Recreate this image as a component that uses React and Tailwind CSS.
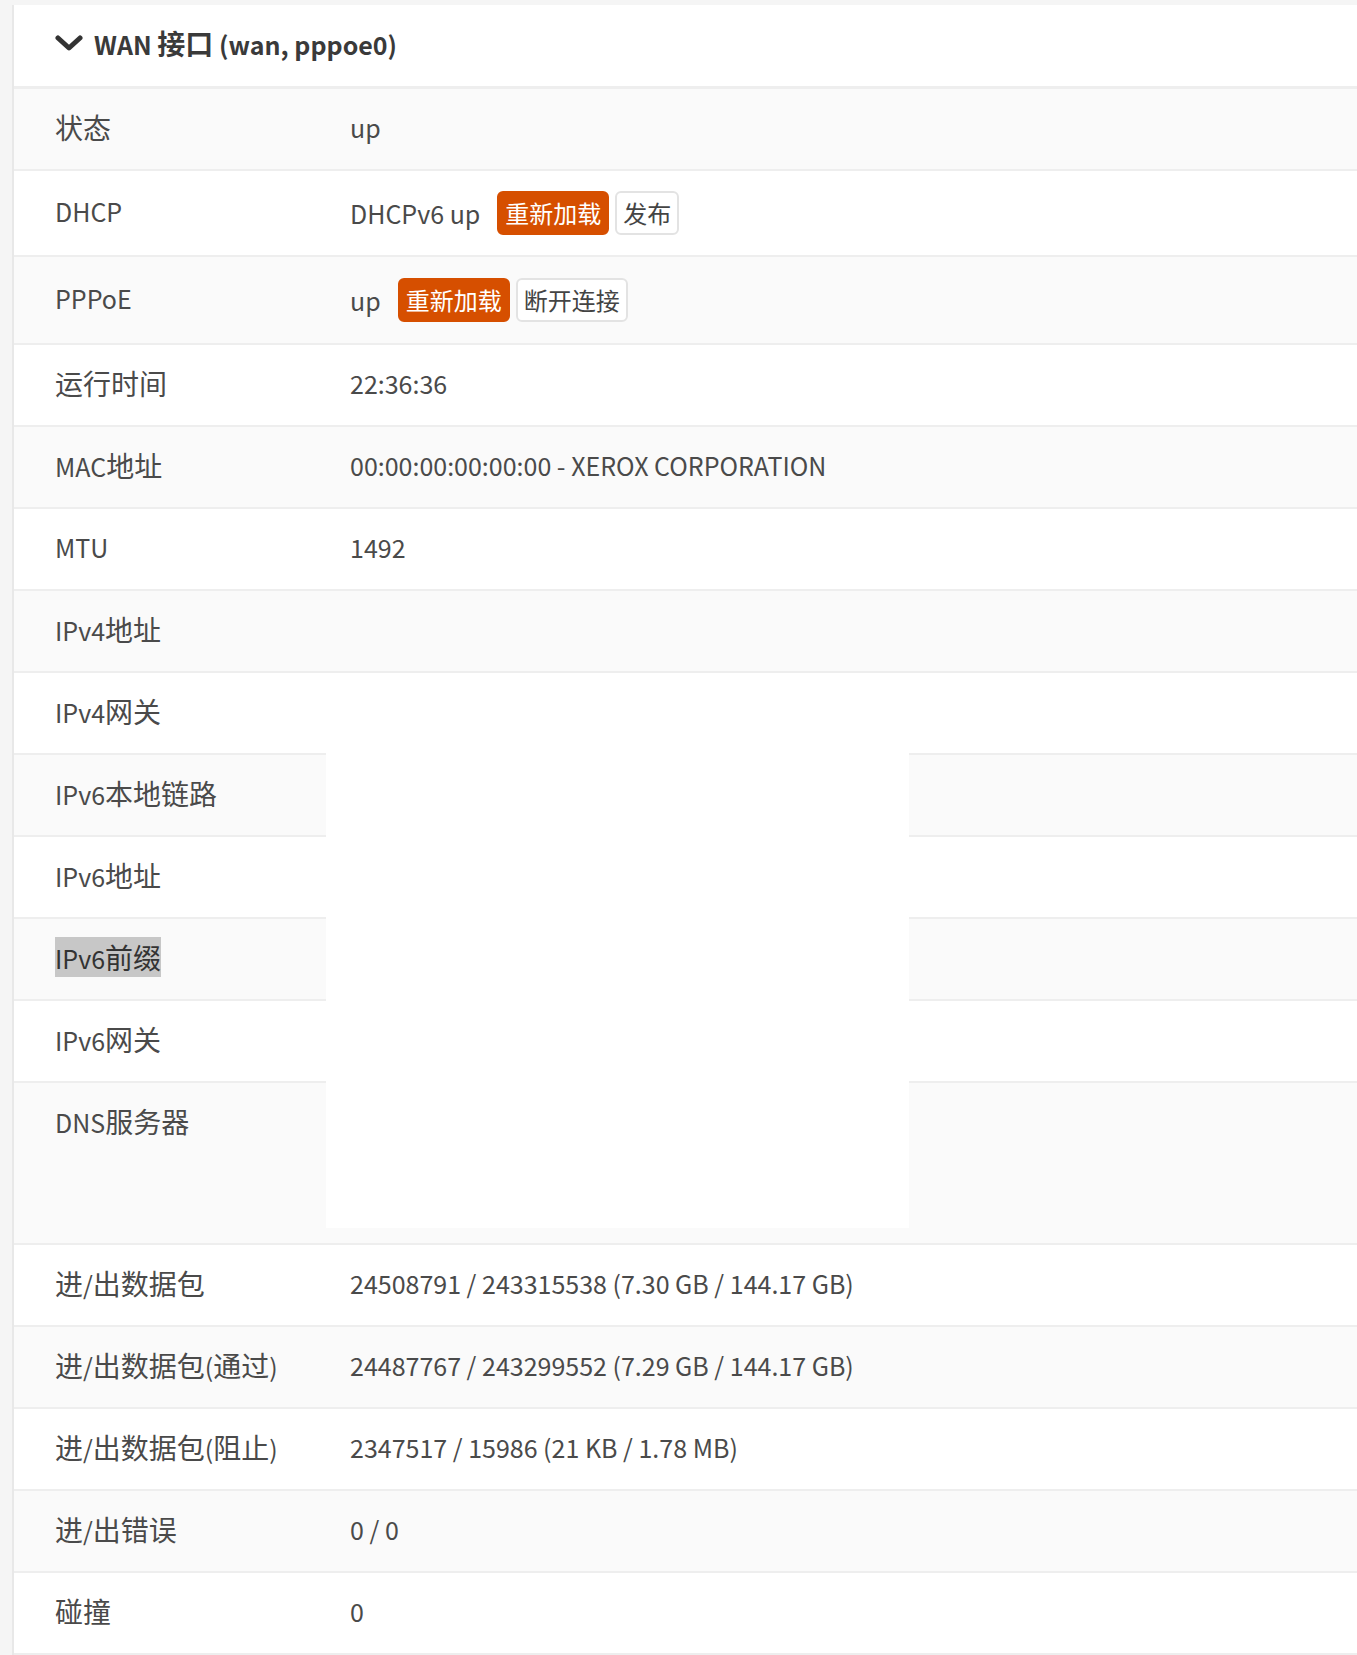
import React from 'react';

// 接口概览：WAN 面板
const rows = [
  { label: '状态', value: 'up' },
  { label: 'DHCP', value: 'DHCPv6 up', buttons: ['重新加载', '发布'] },
  { label: 'PPPoE', value: 'up', buttons: ['重新加载', '断开连接'], extra: true },
  { label: '运行时间', value: '22:36:36' },
  { label: 'MAC地址', value: '00:00:00:00:00:00 - XEROX CORPORATION' },
  { label: 'MTU', value: '1492' },
  { label: 'IPv4地址', value: '' },
  { label: 'IPv4网关', value: '' },
  { label: 'IPv6本地链路', value: '' },
  { label: 'IPv6地址', value: '' },
  { label: 'IPv6前缀', value: '', selected: true },
  { label: 'IPv6网关', value: '' },
  { label: 'DNS服务器', value: '', tall: true },
  { label: '进/出数据包', value: '24508791 / 243315538 (7.30 GB / 144.17 GB)' },
  { label: '进/出数据包(通过)', value: '24487767 / 243299552 (7.29 GB / 144.17 GB)' },
  { label: '进/出数据包(阻止)', value: '2347517 / 15986 (21 KB / 1.78 MB)' },
  { label: '进/出错误', value: '0 / 0' },
  { label: '碰撞', value: '0' },
];

// 拉丁字符比汉字略小一号
function Mixed({ text }) {
  const parts = text.split(/([\u3000-\u9fff\uff00-\uffef]+)/).filter(Boolean);
  return parts.map((p, i) =>
    /[\u3000-\u9fff\uff00-\uffef]/.test(p) ? (
      <span key={i} className="text-[28px]">{p}</span>
    ) : (
      <span key={i} className="text-[25px]">{p}</span>
    )
  );
}

function Chevron() {
  return (
    <svg width="28" height="17" viewBox="0 0 28 17" className="shrink-0">
      <polyline points="3,3 14,13 25,3" fill="none" stroke="#333" strokeWidth="5" strokeLinecap="round" strokeLinejoin="round" />
    </svg>
  );
}

function Btn({ children, primary, first }) {
  return (
    <span
      className={`inline-flex items-center h-[44px] px-[6px] border-2 rounded-[6px] text-[24px] leading-none ${
        first ? 'ml-[17px]' : 'ml-[6px]'
      } ${primary ? 'bg-[#d64f00] border-[#d64f00] text-white' : 'bg-white border-[#e3e3e3] text-[#444]'}`}
    >
      {children}
    </span>
  );
}

export default function App() {
  return (
    <div className="min-h-screen bg-[#f5f5f5] pt-[5px] pl-[12px] font-['Noto_Sans_CJK_SC','Source_Han_Sans_SC',sans-serif] text-[#4a4a4a]">
      <div className="relative bg-white border-l-2 border-[#e8e8e8]">
        {/* 标题 */}
        <div className="h-[84px] flex items-center gap-[11px] pl-[41px] pb-[5px] border-b-[3px] border-[#eeeeee]">
          <Chevron />
          <span className="font-semibold text-[#3a3a3a] leading-none">
            <Mixed text="WAN 接口 (wan, pppoe0)" />
          </span>
        </div>

        {rows.map((row, i) => {
          const pad = row.buttons ? (row.extra ? 'pt-[21px] pb-[21px]' : 'pt-[20px] pb-[20px]') : 'pt-[18px] pb-[22px]';
          return (
            <div
              key={row.label}
              className={`grid grid-cols-[312px_1fr] border-b-2 border-[#eeeeee] ${i % 2 === 0 ? 'bg-[#fafafa]' : 'bg-white'}`}
            >
              <div className={`pl-[41px] ${pad}`}>
                <div className={`h-[40px] leading-[40px] whitespace-nowrap ${row.buttons ? 'mt-[0px]' : ''}`}>
                  {row.selected ? (
                    <span className="inline-block h-[40px] bg-[#c7c7c7] text-[#333]"><Mixed text={row.label} /></span>
                  ) : (
                    <Mixed text={row.label} />
                  )}
                </div>
              </div>
              <div className={`pl-[24px] ${pad} ${row.tall ? 'h-[160px]' : ''}`}>
                {row.buttons ? (
                  <div className="flex items-center h-[44px] leading-[40px]">
                    <span className="text-[25px]">{row.value}</span>
                    <Btn primary first>{row.buttons[0]}</Btn>
                    <Btn>{row.buttons[1]}</Btn>
                  </div>
                ) : (
                  <div className="h-[40px] leading-[40px] whitespace-nowrap">
                    <Mixed text={row.value} />
                  </div>
                )}
              </div>
            </div>
          );
        })}

        {/* 遮盖的地址信息 */}
        <div className="absolute left-[312px] top-[695px] w-[583px] h-[528px] bg-white" />
      </div>
    </div>
  );
}
